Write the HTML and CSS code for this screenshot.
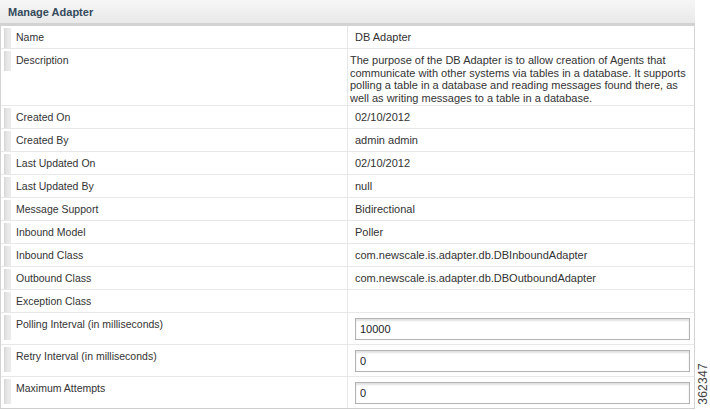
FILE: index.html
```html
<!DOCTYPE html>
<html>
<head>
<meta charset="utf-8">
<link rel="stylesheet" href="styles.css">
</head>
<body>
<div class="page">
  <div class="panel">
    <div class="header">Manage Adapter</div>
    <div class="row"><div class="label"><span class="bar"></span><span class="ltext">Name</span></div><div class="value">DB Adapter</div></div>
    <div class="row desc"><div class="label"><span class="bar"></span><span class="ltext">Description</span></div><div class="value dvalue">The purpose of the DB Adapter is to allow creation of Agents that communicate with other systems via tables in a database. It supports polling a table in a database and reading messages found there, as well as writing messages to a table in a database.</div></div>
    <div class="row"><div class="label"><span class="bar"></span><span class="ltext">Created On</span></div><div class="value">02/10/2012</div></div>
    <div class="row"><div class="label"><span class="bar"></span><span class="ltext">Created By</span></div><div class="value">admin admin</div></div>
    <div class="row"><div class="label"><span class="bar"></span><span class="ltext">Last Updated On</span></div><div class="value">02/10/2012</div></div>
    <div class="row"><div class="label"><span class="bar"></span><span class="ltext">Last Updated By</span></div><div class="value">null</div></div>
    <div class="row"><div class="label"><span class="bar"></span><span class="ltext">Message Support</span></div><div class="value">Bidirectional</div></div>
    <div class="row"><div class="label"><span class="bar"></span><span class="ltext">Inbound Model</span></div><div class="value">Poller</div></div>
    <div class="row"><div class="label"><span class="bar"></span><span class="ltext">Inbound Class</span></div><div class="value">com.newscale.is.adapter.db.DBInboundAdapter</div></div>
    <div class="row"><div class="label"><span class="bar"></span><span class="ltext">Outbound Class</span></div><div class="value">com.newscale.is.adapter.db.DBOutboundAdapter</div></div>
    <div class="row"><div class="label"><span class="bar"></span><span class="ltext">Exception Class</span></div><div class="value"></div></div>
    <div class="row irow"><div class="label"><span class="bar"></span><span class="ltext">Polling Interval (in milliseconds)</span></div><div class="value ivalue"><input class="field" type="text" value="10000"></div></div>
    <div class="row irow"><div class="label"><span class="bar"></span><span class="ltext">Retry Interval (in milliseconds)</span></div><div class="value ivalue"><input class="field" type="text" value="0"></div></div>
    <div class="row irow last"><div class="label"><span class="bar"></span><span class="ltext">Maximum Attempts</span></div><div class="value ivalue"><input class="field" type="text" value="0"></div></div>
  </div>
  <div class="side"><span class="figno">362347</span></div>
</div>
</body>
</html>
```
FILE: styles.css
```css
* { box-sizing: border-box; }
html, body { margin: 0; padding: 0; background: #fff; }
body { font-family: "Liberation Sans", Arial, sans-serif; font-size: 11px; color: #333; }
.page { display: flex; width: 710px; height: 410px; }
.panel {
  width: 695px;
  border-left: 1px solid #d4d4d4;
  border-right: 1px solid #d4d4d4;
  border-bottom: 1px solid #cfcfcf;
  align-self: flex-start;
}
.header {
  height: 26px;
  margin: 0 -1px;
  padding: 0 8px;
  background: linear-gradient(#f6f6f6, #e9e9e9);
  border-bottom: 3px solid #d2d2d2;
  font-weight: bold;
  font-size: 11px;
  line-height: 24px;
  color: #34495c;
}
.row {
  display: grid;
  grid-template-columns: 347px 1fr;
  height: 23px;
  border-bottom: 1px solid #e8e8e8;
}
.row.last { border-bottom: none; }
.row.desc { height: 57px; }
.row.irow { height: 32px; }
.row.last { height: 31px; }
.label {
  display: flex;
  align-items: flex-start;
  padding: 2px 0 0 3px;
  border-right: 1px solid #e8e8e8;
  font-size: 10.5px;
}
.bar {
  width: 7px;
  height: 20px;
  flex: none;
  background: linear-gradient(to right, #d6d6d6, #e6e6e6 40%, #ececec);
}
.irow .bar { height: 25px; }
.ltext { padding-left: 5px; line-height: 19px; }
.value { padding-left: 7px; line-height: 22px; }
.dvalue { padding: 5px 6px 0 2px; line-height: 12.6px; }
.ivalue { padding-top: 5px; padding-right: 4px; }
.field {
  display: block;
  width: 335px;
  height: 22px;
  margin: 0;
  padding: 0 4px;
  border: 1px solid #b4b4b4;
  border-radius: 0;
  box-shadow: inset 0 2px 2px rgba(0, 0, 0, 0.12);
  background: #fff;
  font-family: "Liberation Sans", Arial, sans-serif;
  font-size: 11px;
  color: #222;
  outline: none;
}
.side { flex: 1; display: flex; align-items: flex-end; justify-content: center; padding-bottom: 5px; }
.figno {
  writing-mode: vertical-rl;
  transform: rotate(180deg);
  font-size: 12px;
  color: #444;
  letter-spacing: 0.3px;
}
```
